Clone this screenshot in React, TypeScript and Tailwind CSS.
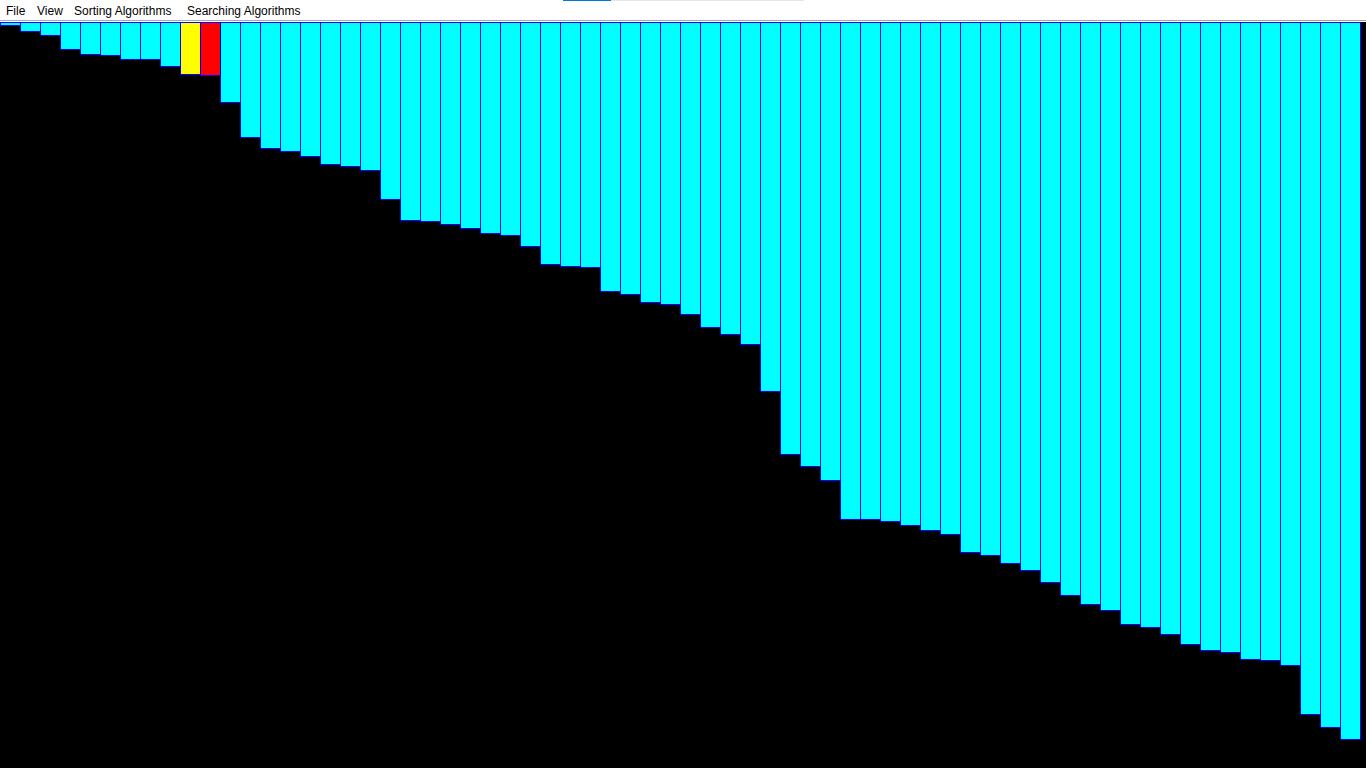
import React from 'react'

// bottom edge (y, inclusive) of each bar; every bar hangs from y=22
const bottoms = [
  24, 30, 34, 48, 53, 54, 58, 58, 65, 73, 74, 101, 136, 147, 150, 155, 163, 165, 169, 198,
  219, 220, 223, 227, 232, 234, 245, 263, 265, 266, 290, 293, 301, 303, 313, 326, 333, 343, 390, 453,
  465, 479, 518, 518, 520, 524, 529, 533, 551, 554, 562, 569, 581, 594, 603, 609, 623, 626, 633, 643,
  649, 651, 658, 659, 664, 713, 726, 738,
].map(b => b + 1)

const COMPARE = 9
const SWAP = 10

function MenuBar() {
  const items = [
    { label: 'File', w: 'w-[31px]' },
    { label: 'View', w: 'w-[37px]' },
    { label: 'Sorting Algorithms', w: 'w-[113px]' },
    { label: 'Searching Algorithms', w: 'w-[130px]' },
  ]
  return (
    <div className="relative h-[20px] bg-white flex items-start">
      {items.map(it => (
        <span
          key={it.label}
          className={`${it.w} pl-[6px] pt-[2px] whitespace-nowrap text-[12px] leading-[18px] text-black`}
          style={{ fontFamily: '"Segoe UI", "Liberation Sans", sans-serif' }}
        >
          {it.label}
        </span>
      ))}
      {/* progress strip peeking over the menu */}
      <div className="absolute top-0 left-[563px] h-px w-[241px] flex">
        <div className="w-[48px] bg-[#0078d7]" />
        <div className="flex-1 bg-[#e6e6e6]" />
      </div>
    </div>
  )
}

function Bar({ index, bottom }: { index: number; bottom: number }) {
  const last = index === bottoms.length - 1
  const fill = index === COMPARE ? 'bg-[#ffff00]' : index === SWAP ? 'bg-[#ff0000]' : 'bg-[#00ffff]'
  return (
    <div
      className={`${fill} ${last ? 'w-[21px] border-r' : 'w-[20px]'} shrink-0 border-l border-t border-b border-[#0000ff]`}
      style={{ height: bottom - 21 }}
    />
  )
}

export default function App() {
  return (
    <div className="w-[1366px] h-[768px] overflow-hidden flex flex-col bg-white">
      <MenuBar />
      <div className="h-px bg-gradient-to-r from-[#a0a0ec] via-[#a0a0dc] to-[#a0a0a0]" />
      <div className="h-px bg-white" />
      <div className="flex-1 bg-black flex items-start">
        {bottoms.map((b, i) => (
          <Bar key={i} index={i} bottom={b} />
        ))}
      </div>
    </div>
  )
}
